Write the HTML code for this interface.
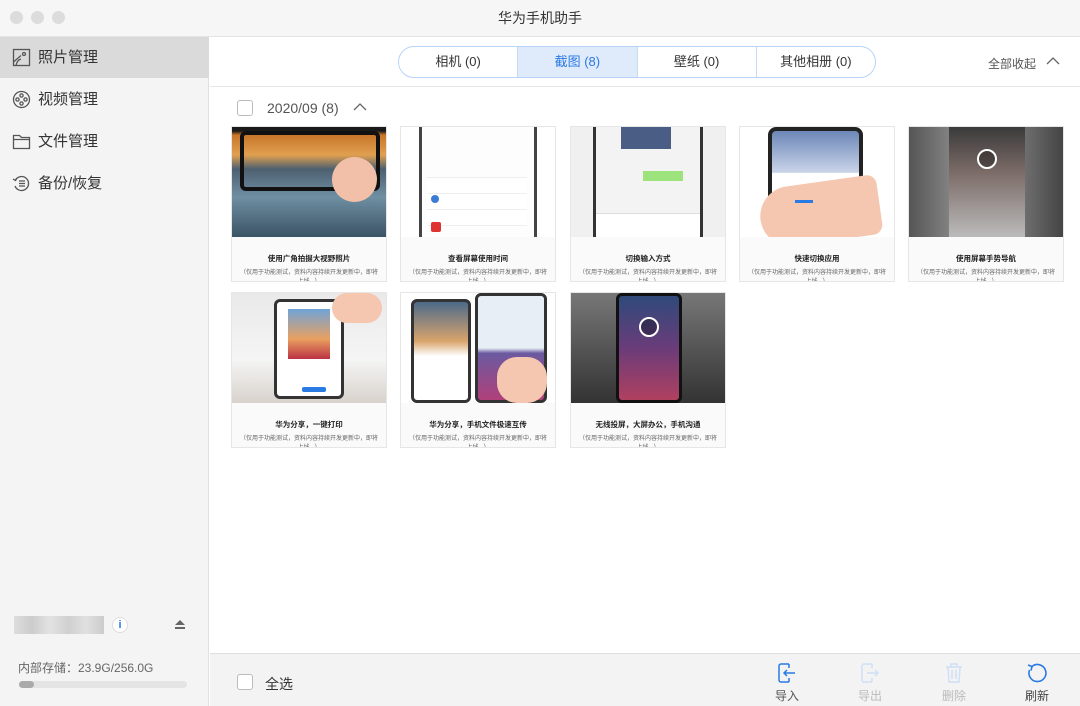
<!DOCTYPE html>
<html><head><meta charset="utf-8"><style>
*{box-sizing:border-box;margin:0;padding:0}
body{width:1080px;height:706px;overflow:hidden;font-family:"Liberation Sans","Noto Sans CJK SC",sans-serif;background:#fff;position:relative;color:#333}
.abs{position:absolute}
.title{left:0;top:0;width:1080px;height:37px;background:#f6f6f6;border-bottom:1px solid #e4e4e4;text-align:center;line-height:37px;font-size:14px;color:#333}
.dot{width:13px;height:13px;border-radius:50%;background:#dcdcdc;top:11px}
.side{left:0;top:37px;width:209px;height:669px;background:#f4f4f4;border-right:1px solid #e0e0e0}
.nav{position:absolute;left:0;width:209px;height:41px;font-size:15px;line-height:41px;padding-left:38px;color:#333}
.nav svg{position:absolute;left:12px;top:11px}
.tabs{left:398px;top:46px;width:478px;height:32px;border:1px solid #b9d3f7;border-radius:16px;overflow:hidden;display:flex}
.tabs div{flex:1;text-align:center;line-height:30px;font-size:13px;color:#333;border-right:1px solid #c7daf5}
.tabs div:last-child{border-right:none}
.card{position:absolute;width:156px;height:156px;border:1px solid #e6e6e6;background:#fafafa;overflow:hidden}
.card .img{height:110px;position:relative;overflow:hidden}
.card .t{font-size:7.5px;font-weight:bold;text-align:center;margin-top:16px;color:#222}
.card .s{font-size:6px;color:#666;text-align:center;margin-top:5px;line-height:9px;padding:0 6px}
.cb{width:16px;height:16px;border:1px solid #bbb;border-radius:3px;background:#fff}
.bb{left:210px;top:653px;width:870px;height:53px;background:#f3f3f3;border-top:1px solid #ddd}
.act{position:absolute;top:8px;width:40px;text-align:center;font-size:12px}
</style></head><body>
<div class="abs title">华为手机助手</div>
<div class="abs dot" style="left:10px"></div><div class="abs dot" style="left:31px"></div><div class="abs dot" style="left:52px"></div>

<div class="abs side">
 <div class="nav" style="top:0;background:#dadada"><svg width="19" height="19" viewBox="0 0 19 19" fill="none" stroke="#555" stroke-width="1.3"><rect x="1.5" y="1.5" width="16" height="16"/><circle cx="12" cy="6" r="1.5"/><path d="M1.5 14 L9 7.5 M4 17.5 Q5 12 9 11"/></svg>照片管理</div>
 <div class="nav" style="top:42px"><svg width="19" height="19" viewBox="0 0 19 19" fill="none" stroke="#555" stroke-width="1.3"><circle cx="9.5" cy="9.5" r="8"/><circle cx="9.5" cy="5.5" r="1.6"/><circle cx="9.5" cy="13.5" r="1.6"/><circle cx="5.5" cy="9.5" r="1.6"/><circle cx="13.5" cy="9.5" r="1.6"/></svg>视频管理</div>
 <div class="nav" style="top:84px"><svg width="19" height="19" viewBox="0 0 19 19" fill="none" stroke="#555" stroke-width="1.3"><path d="M1.5 3.5h6l2 2h8v11h-16z M1.5 7.5h16"/></svg>文件管理</div>
 <div class="nav" style="top:126px"><svg width="19" height="19" viewBox="0 0 19 19" fill="none" stroke="#555" stroke-width="1.3"><path d="M3.5 6 A7 7 0 1 1 3 12"/><path d="M1 5 L3.5 6.5 L5 4"/><path d="M7 7h6M7 9.5h6M7 12h6"/></svg>备份/恢复</div>
 <div class="abs" style="left:14px;top:579px;width:90px;height:18px;background:linear-gradient(90deg,#ddd,#ccc 20%,#e3e3e3 40%,#d0d0d0 60%,#e0e0e0 80%,#ccc)"></div>
 <div class="abs" style="left:112px;top:580px;width:16px;height:16px;border-radius:50%;background:#fff;border:1px solid #ddd;color:#2a7ae4;font-size:11px;font-weight:bold;text-align:center;line-height:14px">i</div>
 <div class="abs" style="left:175px;top:583px;width:0;height:0;border-left:5px solid transparent;border-right:5px solid transparent;border-bottom:5px solid #666"></div>
 <div class="abs" style="left:175px;top:590px;width:10px;height:2px;background:#666"></div>
 <div class="abs" style="left:18px;top:622px;font-size:12px;color:#666">内部存储：23.9G/256.0G</div>
 <div class="abs" style="left:19px;top:644px;width:168px;height:7px;border-radius:4px;background:#e4e4e4"><div style="width:15px;height:7px;border-radius:4px;background:#aaa"></div></div>
</div>

<div class="abs tabs"><div>相机 (0)</div><div style="background:#dfeafb;color:#2a7ae4">截图 (8)</div><div>壁纸 (0)</div><div>其他相册 (0)</div></div>
<div class="abs" style="left:988px;top:55px;font-size:12px;color:#555">全部收起</div>
<svg class="abs" style="left:1046px;top:56px" width="14" height="10"><path d="M1 8 L7 2 L13 8" fill="none" stroke="#666" stroke-width="1.3"/></svg>
<div class="abs" style="left:210px;top:86px;width:870px;height:1px;background:#e6e6e6"></div>
<div class="abs cb" style="left:237px;top:100px"></div>
<div class="abs" style="left:267px;top:100px;font-size:14px;color:#555">2020/09 (8)</div>
<svg class="abs" style="left:353px;top:102px" width="14" height="10"><path d="M1 8 L7 2 L13 8" fill="none" stroke="#666" stroke-width="1.3"/></svg>

<div class="card" style="left:231px;top:126px"><div class="img" style="background:linear-gradient(180deg,#1a1a1a 0,#1a1a1a 4px,#c8762a 8px,#e0a050 28px,#4d6070 42px,#6f8fa3 70px,#3b5365 110px)"><div class="abs" style="left:8px;top:4px;width:140px;height:60px;border:4px solid #111;border-radius:6px"></div><div class="abs" style="left:100px;top:30px;width:45px;height:45px;border-radius:50%;background:#f2c0a8"></div></div><div class="t">使用广角拍摄大视野照片</div><div class="s">（仅用于功能测试，资料内容持续开发更新中，即将上线...）</div></div>
<div class="card" style="left:400px;top:126px"><div class="img" style="background:#fff"><div class="abs" style="left:18px;top:0;width:118px;height:110px;border-left:3px solid #444;border-right:3px solid #444;background:#fdfdfd"></div><div class="abs" style="left:26px;top:50px;width:100px;height:50px;background:linear-gradient(180deg,#eee 1px,#fff 1px) 0 0/100% 16px"></div><div class="abs" style="left:30px;top:68px;width:8px;height:8px;background:#3a7bd5;border-radius:50%"></div><div class="abs" style="left:30px;top:95px;width:10px;height:10px;background:#d33;border-radius:2px"></div></div><div class="t">查看屏幕使用时间</div><div class="s">（仅用于功能测试，资料内容持续开发更新中，即将上线...）</div></div>
<div class="card" style="left:570px;top:126px"><div class="img" style="background:#f0f0f0"><div class="abs" style="left:22px;top:0;width:110px;height:110px;border-left:3px solid #333;border-right:3px solid #333;background:#f3f3f3"></div><div class="abs" style="left:50px;top:0;width:50px;height:22px;background:#4a5d85"></div><div class="abs" style="left:72px;top:44px;width:40px;height:10px;background:#9be37a"></div><div class="abs" style="left:25px;top:86px;width:104px;height:24px;background:#fff;border-top:1px solid #ddd"></div></div><div class="t">切换输入方式</div><div class="s">（仅用于功能测试，资料内容持续开发更新中，即将上线...）</div></div>
<div class="card" style="left:739px;top:126px"><div class="img" style="background:#fff"><div class="abs" style="left:28px;top:0;width:95px;height:100px;border:4px solid #222;border-radius:8px;background:linear-gradient(180deg,#6c87b8,#c9d4e8 45%,#fff 46%)"></div><div class="abs" style="left:20px;top:55px;width:120px;height:60px;background:#f5c7b0;border-radius:30px 10px 10px 30px;transform:rotate(-8deg)"></div><div class="abs" style="left:55px;top:73px;width:18px;height:3px;background:#2a7ae4"></div></div><div class="t">快速切换应用</div><div class="s">（仅用于功能测试，资料内容持续开发更新中，即将上线...）</div></div>
<div class="card" style="left:908px;top:126px"><div class="img" style="background:linear-gradient(90deg,#555,#888 30%,#aaa 50%,#777 70%,#444)"><div class="abs" style="left:40px;top:0;width:76px;height:110px;background:linear-gradient(180deg,#3a3a3a,#7a6a66 40%,#bbb)"></div><div class="abs" style="left:68px;top:22px;width:20px;height:20px;border-radius:50%;border:2px solid #fff;background:rgba(0,0,0,.3)"></div></div><div class="t">使用屏幕手势导航</div><div class="s">（仅用于功能测试，资料内容持续开发更新中，即将上线...）</div></div>

<div class="card" style="left:231px;top:292px"><div class="img" style="background:linear-gradient(180deg,#e9e9e9,#f5f5f5 60%,#d8d2cc)"><div class="abs" style="left:42px;top:6px;width:70px;height:100px;border:3px solid #333;border-radius:6px;background:#fff"></div><div class="abs" style="left:56px;top:16px;width:42px;height:50px;background:linear-gradient(180deg,#6fa4d8,#e9a060 60%,#b34)"></div><div class="abs" style="left:70px;top:94px;width:24px;height:5px;background:#2a7ae4;border-radius:2px"></div><div class="abs" style="left:100px;top:0;width:50px;height:30px;background:#f5c7b0;border-radius:15px"></div></div><div class="t">华为分享，一键打印</div><div class="s">（仅用于功能测试，资料内容持续开发更新中，即将上线...）</div></div>
<div class="card" style="left:400px;top:292px"><div class="img" style="background:#fff"><div class="abs" style="left:10px;top:6px;width:60px;height:104px;border:3px solid #333;border-radius:6px;background:linear-gradient(180deg,#4c6a8a,#d9a46c 40%,#fff 55%)"></div><div class="abs" style="left:74px;top:0;width:72px;height:110px;border:3px solid #333;border-radius:6px;background:linear-gradient(180deg,#e8eef5 0,#e8eef5 50%,#6b5aa0 55%,#b0407a 100%)"></div><div class="abs" style="left:96px;top:64px;width:50px;height:46px;background:#f5c7b0;border-radius:20px"></div></div><div class="t">华为分享，手机文件极速互传</div><div class="s">（仅用于功能测试，资料内容持续开发更新中，即将上线...）</div></div>
<div class="card" style="left:570px;top:292px"><div class="img" style="background:linear-gradient(180deg,#777,#555 50%,#333)"><div class="abs" style="left:45px;top:0;width:66px;height:110px;border:3px solid #111;border-radius:6px;background:linear-gradient(180deg,#2f4a7a,#6a3c7a 50%,#b04060)"></div><div class="abs" style="left:68px;top:24px;width:20px;height:20px;border-radius:50%;border:2px solid #fff;background:rgba(0,0,0,.3)"></div></div><div class="t">无线投屏，大屏办公，手机沟通</div><div class="s">（仅用于功能测试，资料内容持续开发更新中，即将上线...）</div></div>

<div class="abs bb">
 <div class="abs cb" style="left:27px;top:20px"></div>
 <div class="abs" style="left:55px;top:20px;font-size:14px;color:#333">全选</div>
 <div class="act" style="left:557px;color:#555"><svg width="22" height="22" viewBox="0 0 22 22" fill="none" stroke="#2a7ae4" stroke-width="1.5"><path d="M13 2H5a2 2 0 0 0-2 2v14a2 2 0 0 0 2 2h8 M13 20v-4 M13 2v4 M19 11H8 M11 8l-3 3 3 3"/></svg><div>导入</div></div>
 <div class="act" style="left:640px;color:#bbb"><svg width="22" height="22" viewBox="0 0 22 22" fill="none" stroke="#cfe0f8" stroke-width="1.5"><path d="M13 2H5a2 2 0 0 0-2 2v14a2 2 0 0 0 2 2h8 M13 20v-4 M13 2v4 M8 11h11 M16 8l3 3-3 3"/></svg><div>导出</div></div>
 <div class="act" style="left:724px;color:#bbb"><svg width="22" height="22" viewBox="0 0 22 22" fill="none" stroke="#cfe0f8" stroke-width="1.5"><path d="M3 5h16 M8 5V2h6v3 M5 5l1 15h10l1-15 M9 8v9 M13 8v9"/></svg><div>删除</div></div>
 <div class="act" style="left:807px;color:#444"><svg width="22" height="22" viewBox="0 0 22 22" fill="none" stroke="#2a7ae4" stroke-width="1.6"><path d="M6 4.5 A8.5 8.5 0 1 1 3.5 8"/><path d="M2 3l4 1.5-1 4"/></svg><div>刷新</div></div>
</div>
</body></html>
